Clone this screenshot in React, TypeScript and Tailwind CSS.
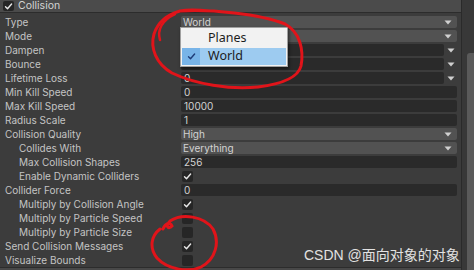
import React from "react";

type Row = {
  label: string;
  indent?: boolean;
  kind: "dropdown" | "field" | "fieldArrow" | "check";
  value?: string;
  checked?: boolean;
};

const rows: Row[] = [
  { label: "Type", kind: "dropdown", value: "World" },
  { label: "Mode", kind: "dropdown", value: "" },
  { label: "Dampen", kind: "fieldArrow", value: "" },
  { label: "Bounce", kind: "fieldArrow", value: "" },
  { label: "Lifetime Loss", kind: "fieldArrow", value: "0" },
  { label: "Min Kill Speed", kind: "field", value: "0" },
  { label: "Max Kill Speed", kind: "field", value: "10000" },
  { label: "Radius Scale", kind: "field", value: "1" },
  { label: "Collision Quality", kind: "dropdown", value: "High" },
  { label: "Collides With", indent: true, kind: "dropdown", value: "Everything" },
  { label: "Max Collision Shapes", indent: true, kind: "field", value: "256" },
  { label: "Enable Dynamic Colliders", indent: true, kind: "check", checked: true },
  { label: "Collider Force", kind: "field", value: "0" },
  { label: "Multiply by Collision Angle", indent: true, kind: "check", checked: true },
  { label: "Multiply by Particle Speed", indent: true, kind: "check", checked: false },
  { label: "Multiply by Particle Size", indent: true, kind: "check", checked: false },
  { label: "Send Collision Messages", kind: "check", checked: true },
  { label: "Visualize Bounds", kind: "check", checked: false },
];

const Tri = () => (
  <svg width="8" height="5" viewBox="0 0 8 5">
    <path d="M0.5 0.5 L7.5 0.5 L4 4.5 Z" fill="#d0d0d0" />
  </svg>
);

const Check = ({ color = "#e8e8e8" }: { color?: string }) => (
  <svg width="9" height="9" viewBox="0 0 9 9">
    <path d="M1.5 4.8 L3.5 6.8 L7.6 2" fill="none" stroke={color} strokeWidth="1.4" strokeLinecap="round" strokeLinejoin="round" />
  </svg>
);

function Control({ row }: { row: Row }) {
  if (row.kind === "dropdown") {
    return (
      <div className="w-[276px] h-[12px] bg-[#525252] rounded-[2px] flex items-center justify-between pl-[2px] pr-[5px] text-[#d2d2d2]">
        <span className="leading-none">{row.value}</span>
        <Tri />
      </div>
    );
  }
  if (row.kind === "field") {
    return (
      <div className="w-[276px] h-[12px] bg-[#2a2a2a] rounded-[2px] flex items-center pl-[3px] text-[#d2d2d2]">
        <span className="leading-none">{row.value}</span>
      </div>
    );
  }
  if (row.kind === "fieldArrow") {
    return (
      <div className="w-[276px] h-[12px] flex items-center">
        <div className="w-[263px] h-[12px] bg-[#2a2a2a] rounded-[2px] flex items-center pl-[3px] text-[#d2d2d2]">
          <span className="leading-none">{row.value}</span>
        </div>
        <div className="flex-1 flex items-center justify-center">
          <Tri />
        </div>
      </div>
    );
  }
  return (
    <div className="w-[11px] h-[11px] ml-[1px] bg-[#262626] rounded-[2px] flex items-center justify-center">
      {row.checked ? <Check /> : null}
    </div>
  );
}

export default function App() {
  return (
    <div
      className="relative w-[474px] h-[270px] overflow-hidden bg-[#3c3c3c] flex"
      style={{ fontFamily: "Inter, 'Liberation Sans', sans-serif" }}
    >
      <div className="w-[461px] h-[270px] flex flex-col text-[10px] text-[#c4c4c4]">
        <div className="shrink-0 h-[12px] bg-[#4b4b4b] border-b border-[#2c2c2c] box-content flex items-center pl-[3px] gap-[4px] text-[#d4d4d4] text-[10.5px]">
          <div className="w-[11px] h-[10px] bg-[#262626] rounded-[2px] flex items-center justify-center">
            <Check />
          </div>
          <span className="leading-none">Collision</span>
        </div>
        <div className="shrink-0 pt-[2px] flex flex-col">
          {rows.map((r, i) => (
            <div key={i} className="shrink-0 h-[14px] flex items-center">
              <div className={`w-[181px] shrink-0 leading-none ${r.indent ? "pl-[19px]" : "pl-[5px]"}`}>
                {r.label}
              </div>
              <Control row={r} />
            </div>
          ))}
        </div>
        <div className="flex-1 bg-[#484848] border-t border-[#2c2c2c] flex items-start pl-[6px]">
          <div className="w-[9px] h-[9px] mt-[2px] bg-[#262626]" />
        </div>
      </div>
      <div className="w-[1px] bg-[#2a2a2a]" />
      <div className="w-[12px] bg-[#383838] flex flex-col pl-[5px]">
        <div className="h-[53px]" />
        <div className="flex-1 bg-[#5a5a5a] rounded-tl-[3px]" />
      </div>

      {/* popup menu */}
      <div
        className="absolute left-[180px] top-[27px] w-[108px] h-[40px] bg-[#f2f2f2] border border-[#a0a0a0] shadow-[1px_2px_3px_rgba(0,0,0,0.5)] flex flex-col px-[1px] pt-[1px] text-[12.5px] text-[#1c1c1c]"
        style={{ fontFamily: "'Noto Sans', 'Open Sans', sans-serif" }}
      >
        <div className="h-[19px] flex items-center pl-[26px]">Planes</div>
        <div className="h-[17px] flex items-center bg-[#9dcbf0]">
          <div className="w-[18px] h-full bg-[#78b4e8] flex items-center justify-center">
            <Check color="#1e3c78" />
          </div>
          <span className="pl-[8px]">World</span>
        </div>
      </div>

      {/* annotations */}
      <svg className="absolute left-0 top-0 pointer-events-none" width="474" height="270" viewBox="0 0 474 270">
        <path
          d="M180 11 C 210 9, 260 14, 285 24 C 300 32, 304 50, 301 66 C 298 78, 282 84, 258 87 C 230 90, 195 84, 172 73 C 156 64, 150 48, 154 34 C 158 22, 166 15, 180 11 C 190 9, 200 10, 210 11"
          fill="none"
          stroke="#e0141a"
          strokeWidth="3"
          strokeLinecap="round"
        />
        <path
          d="M160 40 C 157 30, 162 20, 175 14"
          fill="none"
          stroke="#e0141a"
          strokeWidth="2.5"
          strokeLinecap="round"
        />
        <path
          d="M163 229 C 165 224, 170 221, 172 226 C 168 230, 165 226, 170 221 C 182 213, 204 216, 213 229 C 220 242, 216 259, 201 267 C 188 273, 167 269, 157 258 C 149 248, 151 236, 160 229"
          fill="none"
          stroke="#e0141a"
          strokeWidth="3"
          strokeLinecap="round"
        />
      </svg>

      {/* watermark */}
      <div
        className="absolute left-[304px] top-[248px] text-[14px] leading-none text-[#e2e2e2] whitespace-nowrap"
        style={{ fontFamily: "'Liberation Sans', 'Noto Sans CJK SC', sans-serif" }}
      >
        CSDN @面向对象的对象
      </div>
    </div>
  );
}
